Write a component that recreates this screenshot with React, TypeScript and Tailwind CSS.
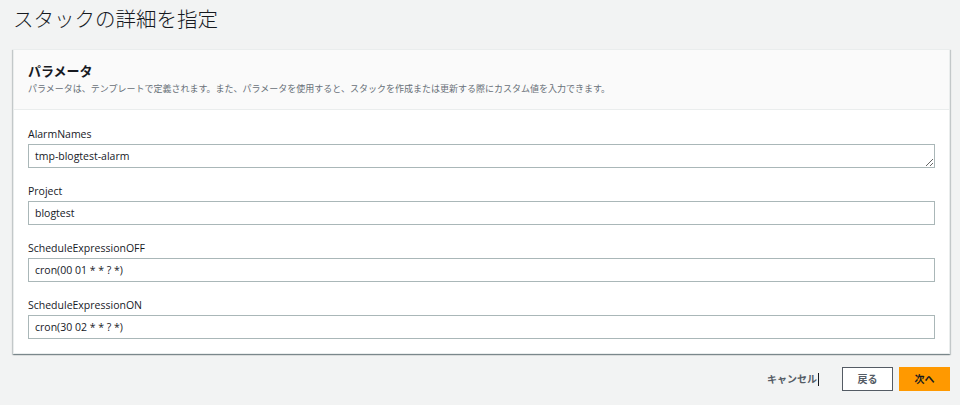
const fields = [
  { label: 'AlarmNames', value: 'tmp-blogtest-alarm', multiline: true },
  { label: 'Project', value: 'blogtest' },
  { label: 'ScheduleExpressionOFF', value: 'cron(00 01 * * ? *)' },
  { label: 'ScheduleExpressionON', value: 'cron(30 02 * * ? *)' },
];

const font = "font-['Open_Sans','Noto_Sans_CJK_JP',sans-serif]";

function Field({ label, value, multiline }: { label: string; value: string; multiline?: boolean }) {
  return (
    <div className="flex flex-col gap-[2px]">
      <label className="text-[10.5px] leading-[16px] text-[#16191f]">{label}</label>
      {multiline ? (
        <textarea
          rows={1}
          defaultValue={value}
          className="block h-[24px] w-full resize-y overflow-hidden border border-[#aab7b8] bg-white px-[6px] py-[3px] text-[10.5px] leading-[16px] text-[#16191f] outline-none"
        />
      ) : (
        <input
          defaultValue={value}
          className="block h-[24px] w-full border border-[#aab7b8] bg-white px-[6px] text-[10.5px] text-[#16191f] outline-none"
        />
      )}
    </div>
  );
}

export default function App() {
  return (
    <div className={`${font} h-[405px] w-[960px] overflow-hidden bg-[#f2f3f3] pl-[13px] pr-[10px] pt-[4px]`}>
      <h1 className="text-[20.5px] font-light leading-[30px] text-[#16191f]">スタックの詳細を指定</h1>

      <div className="mt-[15px] border border-[#eaeded] bg-white shadow-[0_1px_1px_0_rgba(0,28,36,0.3),1px_1px_1px_0_rgba(0,28,36,0.15),-1px_1px_1px_0_rgba(0,28,36,0.15)]">
        <div className="border-b border-[#eaeded] bg-[#fafafa] px-[14px] pb-[14px] pt-[12px]">
          <h2 className="text-[13px] font-bold leading-[18px] text-[#16191f]">パラメータ</h2>
          <p className="mt-[2px] text-[9px] leading-[13px] text-[#687078]">
            パラメータは、テンプレートで定義されます。また、パラメータを使用すると、スタックを作成または更新する際にカスタム値を入力できます。
          </p>
        </div>
        <div className="flex flex-col gap-[15px] pb-[14px] pl-[14px] pr-[14px] pt-[16px]">
          {fields.map((f) => (
            <Field key={f.label} {...f} />
          ))}
        </div>
      </div>

      <div className="mt-[13px] flex items-center justify-end">
        <span className="text-[10px] font-bold text-[#545b64]">キャンセル</span>
        <span className="ml-[1px] mr-[23px] h-[13px] w-px bg-[#16191f]" />
        <button
          type="button"
          className="h-[24px] w-[51px] border border-[#545b64] bg-white text-[10px] font-bold text-[#545b64]"
        >
          戻る
        </button>
        <button
          type="button"
          className="ml-[6px] h-[24px] w-[51px] bg-[#ff9900] text-[10px] font-bold text-[#16191f]"
        >
          次へ
        </button>
      </div>
    </div>
  );
}
